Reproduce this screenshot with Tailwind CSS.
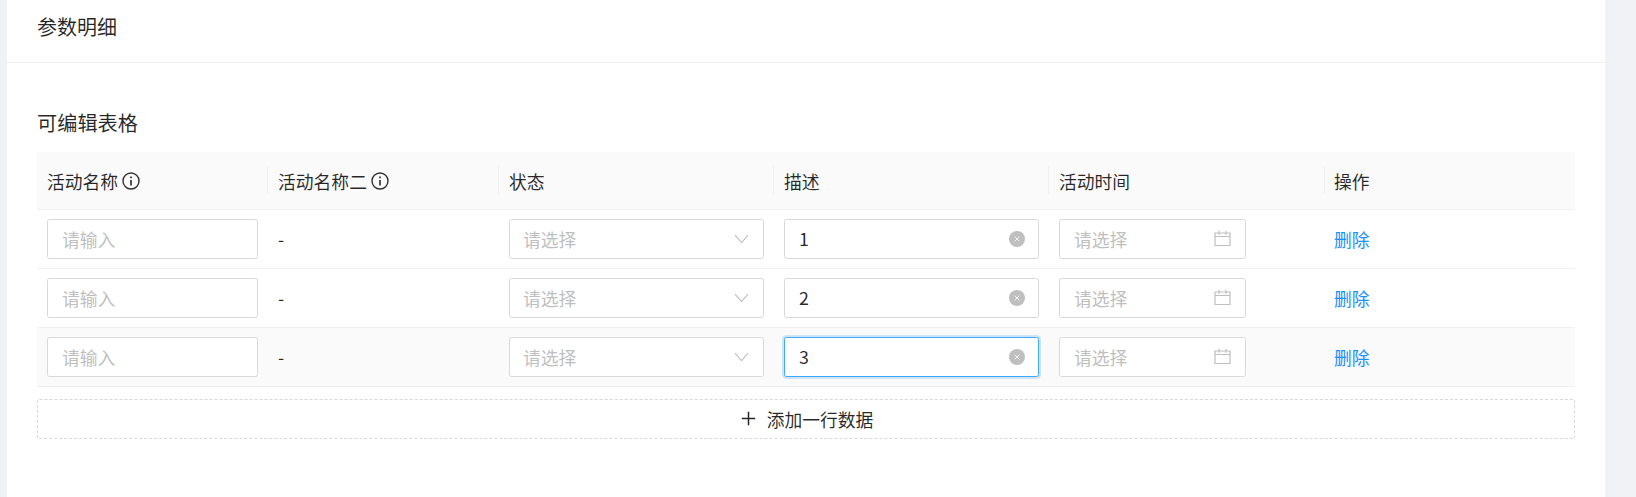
<!DOCTYPE html>
<html lang="zh-CN">

<head>
    <meta charset="UTF-8">
    <title>参数明细</title>
    <script src="https://cdn.jsdelivr.net/npm/@tailwindcss/browser@4"></script>
</head>

<body class="bg-[#f0f2f5] h-[497px] overflow-hidden font-['Noto_Sans_CJK_SC','Noto_Sans',sans-serif] text-[17.8px] text-black/85">
    <div class="ml-[7px] mr-[31px] bg-white h-full">
        <div class="h-[63px] px-[30px] pt-[12px] border-b border-[#f0f0f0]">
            <h2 class="text-[20px] leading-[30px]">参数明细</h2>
        </div>

        <div class="px-[30px] pt-[45px]">
            <h3 class="text-[20.2px] leading-[30px] mb-[14px]">可编辑表格</h3>

            <table class="w-[1538px] table-fixed border-collapse">
                <colgroup>
                    <col class="w-[231px]">
                    <col class="w-[231px]">
                    <col class="w-[275px]">
                    <col class="w-[275px]">
                    <col class="w-[276px]">
                    <col class="w-[250px]">
                </colgroup>
                <thead>
                    <tr class="h-[57px] bg-[#fafafa] border-b border-[#f0f0f0] text-left">
                        <th class="relative px-[10px] font-normal after:absolute after:right-0 after:top-[14px] after:h-[28px] after:w-px after:bg-[#efefef]">
                            <span class="flex items-center gap-[4px]"><span class="pt-[2px]">活动名称</span>
                                <svg class="w-[18px] h-[18px] mt-[2px]" viewBox="0 0 18 18" fill="none" stroke="#333" stroke-width="1.4"><circle cx="9" cy="9" r="8"/><path d="M9 8v5.6M9 4.4v1.9" stroke-width="1.7"/></svg>
                            </span>
                        </th>
                        <th class="relative px-[10px] font-normal after:absolute after:right-0 after:top-[14px] after:h-[28px] after:w-px after:bg-[#efefef]">
                            <span class="flex items-center gap-[4px]"><span class="pt-[2px]">活动名称二</span>
                                <svg class="w-[18px] h-[18px] mt-[2px]" viewBox="0 0 18 18" fill="none" stroke="#333" stroke-width="1.4"><circle cx="9" cy="9" r="8"/><path d="M9 8v5.6M9 4.4v1.9" stroke-width="1.7"/></svg>
                            </span>
                        </th>
                        <th class="relative px-[10px] pt-[2px] font-normal after:absolute after:right-0 after:top-[14px] after:h-[28px] after:w-px after:bg-[#efefef]">状态</th>
                        <th class="relative px-[10px] pt-[2px] font-normal after:absolute after:right-0 after:top-[14px] after:h-[28px] after:w-px after:bg-[#efefef]">描述</th>
                        <th class="relative px-[10px] pt-[2px] font-normal after:absolute after:right-0 after:top-[14px] after:h-[28px] after:w-px after:bg-[#efefef]">活动时间</th>
                        <th class="pl-[9px] pr-[10px] pt-[2px] font-normal">操作</th>
                    </tr>
                </thead>
                <tbody>
                    <tr class="h-[59px] border-b border-[#f0f0f0]">
                        <td class="px-[10px]"><div class="h-[40px] flex items-center px-[14px] border border-[#d9d9d9] rounded-[2.5px] bg-white text-[#bfbfbf]"><span class="pt-[2px]">请输入</span></div></td>
                        <td class="px-[10px]">-</td>
                        <td class="px-[10px]">
                            <div class="h-[40px] flex items-center justify-between pl-[13px] pr-[14px] border border-[#d9d9d9] rounded-[2.5px] bg-white text-[#bfbfbf]"><span class="pt-[2px]">请选择</span>
                                <svg class="w-[15px] h-[15px]" viewBox="0 0 15 15" fill="none" stroke="#bfbfbf" stroke-width="1.1"><path d="M1 4.2l6.5 7.4 6.5-7.4"/></svg>
                            </div>
                        </td>
                        <td class="px-[10px]">
                            <div class="h-[40px] flex items-center justify-between pl-[14px] pr-[13px] border border-[#d9d9d9] rounded-[2.5px] bg-white"><span>1</span>
                                <svg class="w-[16px] h-[16px]" viewBox="0 0 16 16"><circle cx="8" cy="8" r="8" fill="#bfbfbf"/><path d="M5.6 5.6l4.8 4.8M10.4 5.6l-4.8 4.8" stroke="#f2f2f2" stroke-width="1"/></svg>
                            </div>
                        </td>
                        <td class="px-[10px]">
                            <div class="w-[187px] h-[40px] flex items-center justify-between px-[14px] border border-[#d9d9d9] rounded-[2.5px] bg-white text-[#bfbfbf]"><span class="pt-[2px]">请选择</span>
                                <svg class="w-[17px] h-[17px]" viewBox="0 0 17 17" fill="none" stroke="#bfbfbf" stroke-width="1.2"><path d="M1 3h15v12.5H1zM1 6.5h15M5 .8v4M12 .8v4"/></svg>
                            </div>
                        </td>
                        <td class="pl-[9px] pr-[10px] pt-[2px] text-[#1890ff]">删除</td>
                    </tr>
                    <tr class="h-[59px] border-b border-[#f0f0f0]">
                        <td class="px-[10px]"><div class="h-[40px] flex items-center px-[14px] border border-[#d9d9d9] rounded-[2.5px] bg-white text-[#bfbfbf]"><span class="pt-[2px]">请输入</span></div></td>
                        <td class="px-[10px]">-</td>
                        <td class="px-[10px]">
                            <div class="h-[40px] flex items-center justify-between pl-[13px] pr-[14px] border border-[#d9d9d9] rounded-[2.5px] bg-white text-[#bfbfbf]"><span class="pt-[2px]">请选择</span>
                                <svg class="w-[15px] h-[15px]" viewBox="0 0 15 15" fill="none" stroke="#bfbfbf" stroke-width="1.1"><path d="M1 4.2l6.5 7.4 6.5-7.4"/></svg>
                            </div>
                        </td>
                        <td class="px-[10px]">
                            <div class="h-[40px] flex items-center justify-between pl-[14px] pr-[13px] border border-[#d9d9d9] rounded-[2.5px] bg-white"><span>2</span>
                                <svg class="w-[16px] h-[16px]" viewBox="0 0 16 16"><circle cx="8" cy="8" r="8" fill="#bfbfbf"/><path d="M5.6 5.6l4.8 4.8M10.4 5.6l-4.8 4.8" stroke="#f2f2f2" stroke-width="1"/></svg>
                            </div>
                        </td>
                        <td class="px-[10px]">
                            <div class="w-[187px] h-[40px] flex items-center justify-between px-[14px] border border-[#d9d9d9] rounded-[2.5px] bg-white text-[#bfbfbf]"><span class="pt-[2px]">请选择</span>
                                <svg class="w-[17px] h-[17px]" viewBox="0 0 17 17" fill="none" stroke="#bfbfbf" stroke-width="1.2"><path d="M1 3h15v12.5H1zM1 6.5h15M5 .8v4M12 .8v4"/></svg>
                            </div>
                        </td>
                        <td class="pl-[9px] pr-[10px] pt-[2px] text-[#1890ff]">删除</td>
                    </tr>
                    <tr class="h-[59px] bg-[#fafafa] border-b border-[#f0f0f0]">
                        <td class="px-[10px]"><div class="h-[40px] flex items-center px-[14px] border border-[#d9d9d9] rounded-[2.5px] bg-white text-[#bfbfbf]"><span class="pt-[2px]">请输入</span></div></td>
                        <td class="px-[10px]">-</td>
                        <td class="px-[10px]">
                            <div class="h-[40px] flex items-center justify-between pl-[13px] pr-[14px] border border-[#d9d9d9] rounded-[2.5px] bg-white text-[#bfbfbf]"><span class="pt-[2px]">请选择</span>
                                <svg class="w-[15px] h-[15px]" viewBox="0 0 15 15" fill="none" stroke="#bfbfbf" stroke-width="1.1"><path d="M1 4.2l6.5 7.4 6.5-7.4"/></svg>
                            </div>
                        </td>
                        <td class="px-[10px]">
                            <div class="h-[40px] flex items-center justify-between pl-[14px] pr-[13px] border border-[#40a9ff] rounded-[2.5px] bg-white shadow-[0_0_0_2px_rgba(24,144,255,0.2)]"><span>3</span>
                                <svg class="w-[16px] h-[16px]" viewBox="0 0 16 16"><circle cx="8" cy="8" r="8" fill="#bfbfbf"/><path d="M5.6 5.6l4.8 4.8M10.4 5.6l-4.8 4.8" stroke="#f2f2f2" stroke-width="1"/></svg>
                            </div>
                        </td>
                        <td class="px-[10px]">
                            <div class="w-[187px] h-[40px] flex items-center justify-between px-[14px] border border-[#d9d9d9] rounded-[2.5px] bg-white text-[#bfbfbf]"><span class="pt-[2px]">请选择</span>
                                <svg class="w-[17px] h-[17px]" viewBox="0 0 17 17" fill="none" stroke="#bfbfbf" stroke-width="1.2"><path d="M1 3h15v12.5H1zM1 6.5h15M5 .8v4M12 .8v4"/></svg>
                            </div>
                        </td>
                        <td class="pl-[9px] pr-[10px] pt-[2px] text-[#1890ff]">删除</td>
                    </tr>
                </tbody>
            </table>

            <button class="mt-[12px] w-[1538px] h-[40px] pl-[2px] flex items-center justify-center gap-[11px] border border-dashed border-[#d9d9d9] rounded-[2.5px]">
                <svg class="w-[15px] h-[15px]" viewBox="0 0 15 15" fill="none" stroke="#262626" stroke-width="1.5"><path d="M7.5 .8v13.4M.8 7.5h13.4"/></svg>
                <span class="pt-[2px]">添加一行数据</span>
            </button>
        </div>
    </div>
</body>

</html>
